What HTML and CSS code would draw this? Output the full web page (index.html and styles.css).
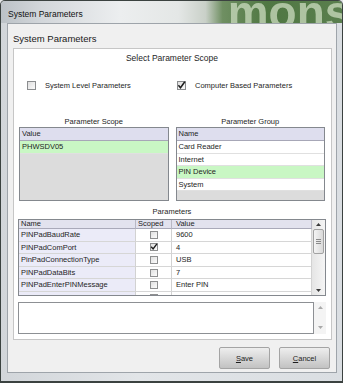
FILE: index.html
```html
<!DOCTYPE html>
<html lang="en">
<head>
    <meta charset="UTF-8">
    <meta name="viewport" content="width=device-width, initial-scale=1.0">
    <title>System Parameters</title>
    <link rel="stylesheet" href="styles.css">
</head>
<body>
    <div class="window">
        <div class="titlebar">
            <span class="caption">System Parameters</span>
            <span class="glass">mons</span>
        </div>
        <div class="frame">
            <div class="client">
                <div class="heading">System Parameters</div>
                <div class="panel">
                    <div class="scope-title">Select Parameter Scope</div>
                    <div class="checks">
                        <label class="check"><span class="box"></span>System Level Parameters</label>
                        <label class="check"><span class="box"><svg width="9" height="9" viewBox="0 0 9 9"><path d="M1.4 4.3 L3.5 6.8 L7.8 0.8" fill="none" stroke="#1c1c1c" stroke-width="1.5"/></svg></span>Computer Based Parameters</label>
                    </div>
                    <div class="lists">
                        <div>
                            <div class="small-title">Parameter Scope</div>
                            <div class="list">
                                <div class="list-head">Value</div>
                                <div class="list-row selected">PHWSDV05</div>
                            </div>
                        </div>
                        <div>
                            <div class="small-title">Parameter Group</div>
                            <div class="list">
                                <div class="list-head">Name</div>
                                <div class="list-row">Card Reader</div>
                                <div class="list-row">Internet</div>
                                <div class="list-row selected">PIN Device</div>
                                <div class="list-row">System</div>
                            </div>
                        </div>
                    </div>
                    <div class="small-title params-title">Parameters</div>
                    <div class="grid">
                        <div class="grid-body">
                            <div class="grid-row grid-head"><span>Name</span><span>Scoped</span><span class="val">Value</span></div>
                            <div class="grid-row"><span class="name">PINPadBaudRate</span><span class="scoped"><i class="cell-box"></i></span><span class="val">9600</span></div>
                            <div class="grid-row"><span class="name">PINPadComPort</span><span class="scoped"><i class="cell-box"><svg width="8" height="8" viewBox="0 0 8 8"><path d="M1.2 3.8 L3.1 6 L6.9 0.8" fill="none" stroke="#1c1c1c" stroke-width="1.4"/></svg></i></span><span class="val">4</span></div>
                            <div class="grid-row"><span class="name">PinPadConnectionType</span><span class="scoped"><i class="cell-box"></i></span><span class="val">USB</span></div>
                            <div class="grid-row"><span class="name">PINPadDataBits</span><span class="scoped"><i class="cell-box"></i></span><span class="val">7</span></div>
                            <div class="grid-row"><span class="name">PINPadEnterPINMessage</span><span class="scoped"><i class="cell-box"></i></span><span class="val">Enter PIN</span></div>
                            <div class="grid-row"><span class="name">PINPadFlowControl</span><span class="scoped"><i class="cell-box"></i></span><span class="val">None</span></div>
                        </div>
                        <div class="vscroll">
                            <div class="sb-btn"><svg width="5" height="3" viewBox="0 0 5 3"><path d="M0 3 L2.5 0 L5 3 Z" fill="#3a3a3a"/></svg></div>
                            <div class="sb-track">
                                <div class="sb-thumb"><svg width="5" height="5" viewBox="0 0 5 5"><path d="M0 0.5 H5 M0 2.5 H5 M0 4.5 H5" stroke="#8a8a8a" stroke-width="1"/></svg></div>
                            </div>
                            <div class="sb-btn"><svg width="5" height="3" viewBox="0 0 5 3"><path d="M0 0 L2.5 3 L5 0 Z" fill="#3a3a3a"/></svg></div>
                        </div>
                    </div>
                    <div class="note">
                        <div class="note-box"></div>
                        <div class="note-scroll">
                            <svg width="5" height="3" viewBox="0 0 5 3"><path d="M0 3 L2.5 0 L5 3 Z" fill="#a9a9a9"/></svg>
                            <svg width="5" height="3" viewBox="0 0 5 3"><path d="M0 0 L2.5 3 L5 0 Z" fill="#a9a9a9"/></svg>
                        </div>
                    </div>
                </div>
                <div class="buttons">
                    <button type="button" class="btn"><u>S</u>ave</button>
                    <button type="button" class="btn"><u>C</u>ancel</button>
                </div>
            </div>
        </div>
    </div>
</body>
</html>
```

FILE: styles.css
```css
*
{
    box-sizing:border-box;
}
body
{
    margin:0;
    background:#e4e6e8;
    font-family:"Liberation Sans",Arial,sans-serif;
    color:#1e1e1e;
}
.window
{
    width:343px;
    height:383px;
    border:1px solid #3b4240;
    border-bottom-width:2px;
    border-radius:5px 5px 0 0;
    background:linear-gradient(to right,#d2d6da,#e2e5e8 40%,#dadee2);
    display:flex;
    flex-direction:column;
    overflow:hidden;
}
.titlebar
{
    height:22px;
    flex-shrink:0;
    padding:4px 0 0 7px;
    display:flex;
    align-items:center;
    overflow:hidden;
    background:linear-gradient(to right,#bcc2c7 0%,#d3d7db 12%,#eceeef 35%,#e4e7e6 52%,#c9d0c8 60%,#6f8f62 65%,#4f7742 78%,#5a7f4e 100%);
}
.caption
{
    font-size:8.5px;
    line-height:10px;
    color:#111;
    white-space:nowrap;
}
.glass
{
    flex-shrink:0;
    align-self:flex-start;
    margin:-16px 0 0 145px;
    font-size:46px;
    line-height:46px;
    font-weight:bold;
    white-space:nowrap;
    color:rgba(196,214,184,0.8);
    filter:blur(0.7px);
}
.frame
{
    flex:1;
    padding:0 5px 8px 6px;
}
.client
{
    height:100%;
    border:1px solid #9ea4aa;
    background:#f0f0f0;
    padding:0 4px 0 5px;
}
.heading
{
    height:24px;
    padding-top:8px;
    line-height:14px;
    font-size:9.5px;
    color:#1a1a1a;
}
.panel
{
    height:292px;
    border:1px solid #c6c6c6;
    background:#fff;
    padding:0 5px 0 4px;
}
.scope-title
{
    margin-top:3px;
    line-height:12px;
    text-align:center;
    font-size:8.5px;
}
.checks
{
    margin-top:15px;
    height:12px;
    padding-left:9px;
    display:grid;
    grid-template-columns:150px auto;
    align-items:center;
}
.check
{
    display:flex;
    align-items:center;
    gap:9px;
    font-size:7.5px;
}
.box
{
    width:9px;
    height:9px;
    border:1px solid #8b8d8f;
    background:linear-gradient(135deg,#dedede,#fbfbfb);
    display:flex;
    align-items:center;
    justify-content:center;
    overflow:visible;
}
.box svg
{
    flex-shrink:0;
}
.lists
{
    margin-top:26px;
    padding:0 1px;
    display:grid;
    grid-template-columns:1fr 1fr;
    column-gap:7px;
}
.small-title
{
    line-height:10px;
    text-align:center;
    font-size:7.5px;
}
.list
{
    height:74px;
    border:1px solid #84888e;
    background:#dcdcdc;
    overflow:hidden;
}
.list-head
{
    height:13px;
    line-height:12px;
    padding-left:2px;
    background:#dedeee;
    border-bottom:1px solid #a7a7b7;
    font-size:7.5px;
}
.list-row
{
    height:12.5px;
    line-height:11.5px;
    padding-left:2px;
    background:#fff;
    border-bottom:1px solid #e0e0e0;
    font-size:7.5px;
}
.list-row.selected
{
    background:#c9f7c4;
}
.params-title
{
    margin-top:6px;
}
.grid
{
    margin-top:2px;
    height:77px;
    border:1px solid #84888e;
    display:flex;
    overflow:hidden;
}
.grid-body
{
    flex:1;
    overflow:hidden;
}
.grid-row
{
    display:grid;
    grid-template-columns:117px 36px 1fr;
    height:12.6px;
}
.grid-row span
{
    border-right:1px solid #d2d2d2;
    border-bottom:1px solid #d6d6d6;
    padding-left:2px;
    line-height:11.6px;
    font-size:7.5px;
    white-space:nowrap;
    overflow:hidden;
}
.grid-row .val
{
    padding-left:4px;
}
.grid-row .name
{
    background:#ebebf8;
}
.grid-row .scoped
{
    display:flex;
    align-items:center;
    justify-content:center;
    padding-left:0;
}
.grid-row.grid-head
{
    height:9px;
}
.grid-head span
{
    background:#e2e2ee;
    border-bottom-color:#a9a9b9;
    border-right-color:#b8b8c4;
    line-height:7px;
}
.cell-box
{
    width:8px;
    height:8px;
    border:1px solid #8e8f90;
    background:linear-gradient(135deg,#e0e0e0,#fcfcfc);
    display:flex;
    align-items:center;
    justify-content:center;
}
.cell-box svg
{
    flex-shrink:0;
}
.vscroll
{
    width:13px;
    flex-shrink:0;
    background:linear-gradient(to right,#e5e5e5,#f5f5f5);
    display:flex;
    flex-direction:column;
}
.sb-btn
{
    height:9px;
    display:flex;
    align-items:center;
    justify-content:center;
}
.sb-track
{
    flex:1;
    padding:0 1px;
}
.sb-thumb
{
    height:25px;
    border:1px solid #a2a2a2;
    border-radius:2px;
    background:linear-gradient(to right,#f4f4f4,#d9d9d9);
    display:flex;
    align-items:center;
    justify-content:center;
}
.note
{
    margin-top:6px;
    height:32px;
    display:flex;
}
.note-box
{
    flex:1;
    border:1px solid #8d9094;
    background:#fff;
}
.note-scroll
{
    width:12px;
    padding:4px 0 5px;
    background:#f4f4f4;
    display:flex;
    flex-direction:column;
    align-items:center;
    justify-content:space-between;
}
.buttons
{
    margin-top:7px;
    padding-right:2px;
    display:flex;
    justify-content:flex-end;
    gap:9px;
}
.btn
{
    width:51px;
    height:22px;
    padding:0;
    border:1px solid #a4a4a4;
    border-radius:2px;
    background:linear-gradient(#eeeeee,#dadada 45%,#c2c2c2);
    font-family:"Liberation Sans",Arial,sans-serif;
    font-size:7.5px;
    color:#1e1e1e;
}
```
